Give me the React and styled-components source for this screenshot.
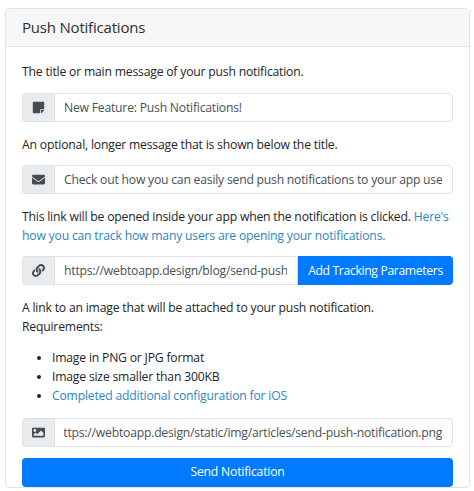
import React, { useEffect, useRef } from 'react';
import styled, { createGlobalStyle } from 'styled-components';
import { FaStickyNote, FaEnvelope, FaLink, FaImage } from 'react-icons/fa';

const GlobalStyle = createGlobalStyle`
  html, body {
    margin: 0;
    background: #fff;
    color: #212529;
    font-family: 'Open Sans', 'Noto Sans', sans-serif;
    font-size: 12.2px;
    letter-spacing: -0.2px;
    line-height: 18.6px;
  }
  * {
    box-sizing: border-box;
  }
`;

const Page = styled.div`
  padding: 8px 4px 0 5px;
  height: 491px;
  overflow: hidden;
`;

const Card = styled.section`
  border: 1px solid #e3e3e3;
  border-radius: 4px;
  background: #fff;
`;

const CardHeader = styled.header`
  height: 38px;
  padding: 0 16px;
  display: flex;
  align-items: center;
  background: #f7f7f7;
  border-bottom: 1px solid #e3e3e3;
  font-size: 15px;
  color: #2b3035;
`;

const CardBody = styled.div`
  padding: 16px 16px 0;
`;

const Text = styled.p`
  margin: 0 0 11px;
`;

const TextLink = styled.a`
  color: #2e86c1;
  text-decoration: none;
`;

const InputGroup = styled.div`
  display: flex;
  height: 29px;
  margin-bottom: 14px;
`;

const Addon = styled.div`
  width: 32px;
  flex: none;
  display: flex;
  align-items: center;
  justify-content: center;
  background: #e9ecef;
  border: 1px solid #dee2e6;
  border-right: none;
  border-radius: 4px 0 0 4px;
  color: #454c53;
  font-size: 13px;
`;

const Field = styled.input`
  flex: 1;
  min-width: 0;
  height: 100%;
  padding: 0 10px 0 9px;
  border: 1px solid #dee2e6;
  border-radius: ${(p) => (p.$joined ? '0' : '0 4px 4px 0')};
  background: #fff;
  color: #495057;
  font: inherit;
  letter-spacing: -0.22px;
  outline: none;
`;

const AddonButton = styled.button`
  flex: none;
  width: 155px;
  border: none;
  border-radius: 0 4px 4px 0;
  background: #007bff;
  color: #fff;
  font: inherit;
  letter-spacing: -0.35px;
  padding: 0;
`;

const Requirements = styled.ul`
  margin: 0 0 13px;
  padding-left: 30px;

  li {
    line-height: 19px;
  }
`;

const SubmitButton = styled.button`
  display: block;
  width: 100%;
  height: 29px;
  border: none;
  border-radius: 4px;
  background: #007bff;
  color: #fff;
  font: inherit;
  letter-spacing: inherit;
  padding: 0;
  margin-top: -3px;
`;

// long url, shown scrolled to its end like a field that was just typed in
const ScrolledField = ({ value }) => {
  const ref = useRef(null);
  useEffect(() => {
    ref.current.scrollLeft = ref.current.scrollWidth;
  }, []);
  return <Field ref={ref} readOnly value={value} />;
};

const App = () => {
  return (
    <Page>
      <GlobalStyle />
      <Card>
        <CardHeader>Push Notifications</CardHeader>
        <CardBody>
          <Text>The title or main message of your push notification.</Text>
          <InputGroup>
            <Addon><FaStickyNote /></Addon>
            <Field readOnly value="New Feature: Push Notifications!" />
          </InputGroup>

          <Text>An optional, longer message that is shown below the title.</Text>
          <InputGroup>
            <Addon><FaEnvelope /></Addon>
            <Field readOnly value="Check out how you can easily send push notifications to your app users" />
          </InputGroup>

          <Text>
            This link will be opened inside your app when the notification is clicked.{' '}
            <TextLink href="#">Here's how you can track how many users are opening your notifications.</TextLink>
          </Text>
          <InputGroup>
            <Addon><FaLink /></Addon>
            <Field $joined readOnly value="https://webtoapp.design/blog/send-push-notifications" />
            <AddonButton>Add Tracking Parameters</AddonButton>
          </InputGroup>

          <Text>
            A link to an image that will be attached to your push notification.
            <br />
            Requirements:
          </Text>
          <Requirements>
            <li>Image in PNG or JPG format</li>
            <li>Image size smaller than 300KB</li>
            <li><TextLink href="#">Completed additional configuration for iOS</TextLink></li>
          </Requirements>
          <InputGroup>
            <Addon><FaImage /></Addon>
            <ScrolledField value="https://webtoapp.design/static/img/articles/send-push-notification.png" />
          </InputGroup>

          <SubmitButton>Send Notification</SubmitButton>
        </CardBody>
      </Card>
    </Page>
  );
};

export default App;
